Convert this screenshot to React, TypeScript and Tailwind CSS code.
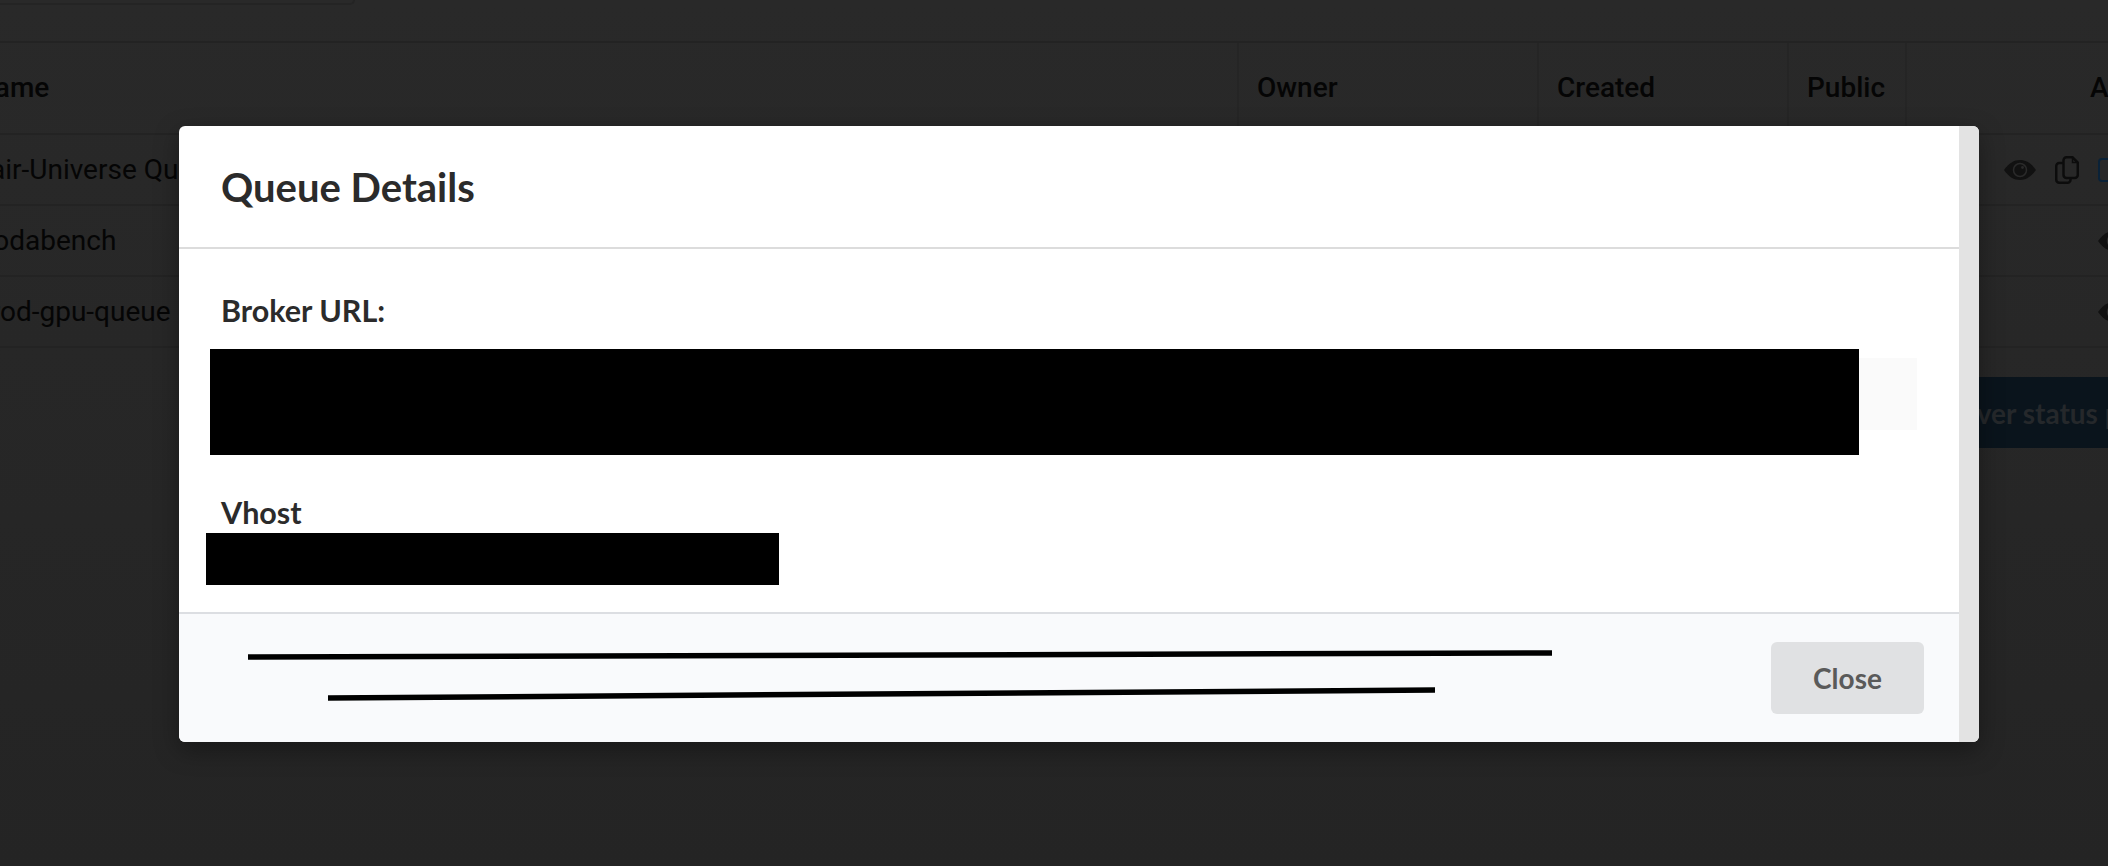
const COLS = "grid grid-cols-[1282px_300px_250px_118px_300px]";

const QUEUES = ["Fair-Universe Queue", "Codabench", "prod-gpu-queue"];

function EyeIcon() {
  return (
    <svg width="32" height="20" viewBox="0 0 32 20" className="shrink-0">
      <path d="M0 10 C5 3 10 0 16 0 C22 0 27 3 32 10 C27 17 22 20 16 20 C10 20 5 17 0 10Z" fill="#111" />
      <circle cx="16" cy="10" r="6.5" fill="none" stroke="#2a2a2a" strokeWidth="1.5" />
      <circle cx="18.5" cy="7.5" r="1.4" fill="#2a2a2a" />
    </svg>
  );
}

function CopyIcon() {
  return (
    <svg width="24" height="28" viewBox="0 0 24 28" fill="none" stroke="#0c0c0c" strokeWidth="2.5" className="shrink-0">
      <path d="M11.5 1.25 H17.5 L22.75 6.5 V19 A3 3 0 0 1 19.75 22 H11.5 A3 3 0 0 1 8.5 19 V4.25 A3 3 0 0 1 11.5 1.25 Z" />
      <path d="M17.5 1.25 V6.5 H22.75" strokeWidth="1.5" />
      <path d="M8.5 7 H4.25 A3 3 0 0 0 1.25 10 V23.75 A3 3 0 0 0 4.25 26.75 H12.5 A3 3 0 0 0 15.5 23.75 V22" />
    </svg>
  );
}

function QueueRow({ name, first }: { name: string; first: boolean }) {
  return (
    <div className={`${COLS} h-[71px] border-b-2 border-[#232323] items-center text-[28px] text-[#050505]`}>
      <div className="pl-5">{name}</div>
      <div />
      <div />
      <div />
      {first ? (
        <div className="flex items-center gap-[19px] pl-[99px]">
          <EyeIcon />
          <CopyIcon />
          <div className="w-6 h-6 shrink-0 border-2 border-[#0a2238] rounded-sm" />
        </div>
      ) : (
        <div className="flex items-center pl-[193px]">
          <EyeIcon />
        </div>
      )}
    </div>
  );
}

export default function App() {
  return (
    <div className="relative h-[866px] w-[2108px] overflow-hidden bg-gradient-to-b from-[#292929] to-[#242424] font-['Roboto',sans-serif]">
      {/* Page behind the backdrop */}
      <div className="h-[5px] w-[355px] border-b-2 border-r-2 border-[#242424] rounded-br-md" />
      <div className="h-9" />
      <div className="-ml-[45px] w-[2250px]">
        <div className={`${COLS} h-[94px] items-center border-y-2 border-[#232323] text-[28px] font-medium text-[#050505]`}>
          <div className="pl-5 h-full flex items-center">Name</div>
          <div className="pl-[18px] h-full flex items-center border-l-2 border-[#252525]">Owner</div>
          <div className="pl-[18px] h-full flex items-center border-l-2 border-[#252525]">Created</div>
          <div className="pl-[18px] h-full flex items-center border-l-2 border-[#252525]">Public</div>
          <div className="pl-[183px] h-full flex items-center border-l-2 border-[#252525]">Actions</div>
        </div>
        {QUEUES.map((name, i) => (
          <QueueRow key={name} name={name} first={i === 0} />
        ))}
        <div className="flex justify-end mt-[29px] pr-[40px]">
          <div className="h-[71px] w-[260px] bg-[#0a141c] flex items-center font-['Lato',sans-serif] font-bold text-[28px] text-[#25282b] pl-[31px] whitespace-nowrap overflow-hidden">
            Server status page
          </div>
        </div>
      </div>

      {/* Modal */}
      <div className="absolute left-[179px] top-[126px] w-[1800px] h-[616px] flex rounded-md overflow-hidden bg-white shadow-[0_8px_24px_rgba(0,0,0,0.35)] font-['Lato',sans-serif] text-[#2b2b2b]">
        <div className="flex-1 flex flex-col min-w-0">
          <div className="h-[123px] flex items-center px-[42px] border-b-2 border-[#dcdcdc]">
            <h2 className="text-[40px] font-bold leading-none">Queue Details</h2>
          </div>
          <div className="flex-1 px-[42px] pt-[46px]">
            <div className="text-[30.5px] font-bold leading-none">Broker URL:</div>
            <div className="relative mt-[32px] h-[72px] w-[1696px] bg-[#fafafa]">
              <div className="absolute -left-[11px] -top-[9px] h-[106px] w-[1649px] bg-black" />
            </div>
            <div className="mt-[67px] text-[30.5px] font-bold leading-none">Vhost</div>
            <div className="-ml-[15px] mt-[6px] h-[52px] w-[573px] bg-black" />
          </div>
          <div className="h-[130px] flex items-center justify-between border-t-2 border-[#dcdee2] bg-[#f9fafc] pl-[69px] pr-[35px]">
            <svg width="1310" height="60" viewBox="0 0 1310 60">
              <path d="M0 9 L1304 5" stroke="#000" strokeWidth="5.5" fill="none" />
              <path d="M80 50 L1187 42" stroke="#000" strokeWidth="5.5" fill="none" />
            </svg>
            <button className="h-[72px] w-[153px] rounded-md bg-[#e0e1e3] text-[#5a5a5a] text-[28px] font-bold">Close</button>
          </div>
        </div>
        <div className="w-5 bg-[#e3e3e3]" />
      </div>
    </div>
  );
}
